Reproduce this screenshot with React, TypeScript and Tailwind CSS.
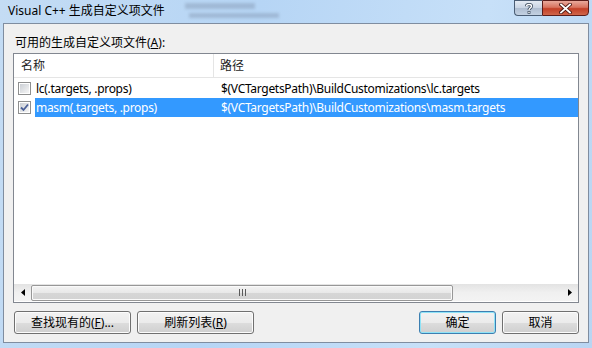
import React from "react";

const ui = { fontFamily: '"Segoe UI", "Noto Sans", "Noto Sans CJK SC", sans-serif' };

function Checkbox({ checked }: { checked?: boolean }) {
  return (
    <div className="w-[13px] h-[13px] border border-[#8e8f8f] bg-white flex items-center justify-center shrink-0">
      <div className="w-[9px] h-[9px] bg-gradient-to-br from-[#cbcfd5] to-[#f6f6f6] flex items-center justify-center">
        {checked && (
          <svg width="9" height="9" viewBox="0 0 9 9">
            <path d="M1 4.5 L3.5 7 L8 1.5" fill="none" stroke="#4a5f97" strokeWidth="1.8" />
          </svg>
        )}
      </div>
    </div>
  );
}

function Button({ children, focused, className }: { children: React.ReactNode; focused?: boolean; className?: string }) {
  return (
    <div
      className={
        "h-[23px] rounded-[3px] border flex items-center justify-center text-[12px] text-black " +
        (focused
          ? "border-[#3c7fb1] shadow-[inset_0_0_0_1px_#8fe3f7] "
          : "border-[#707070] shadow-[inset_0_0_0_1px_#fcfcfc] ") +
        (className ?? "")
      }
      style={{ background: "linear-gradient(#f2f2f2 0%, #ebebeb 50%, #dddddd 51%, #cfcfcf 100%)" }}
    >
      {children}
    </div>
  );
}

function Row({ name, path, checked, selected }: { name: string; path: string; checked?: boolean; selected?: boolean }) {
  return (
    <div className="flex items-center h-[19px] pl-[4px] tracking-[-0.3px]">
      <Checkbox checked={checked} />
      <div className={"flex flex-1 h-full items-center ml-[4px] " + (selected ? "bg-[#3399ff] text-white" : "text-black")}>
        <div className="w-[183px] pl-[1px] whitespace-nowrap">{name}</div>
        <div className="pl-[3px] whitespace-nowrap">{path}</div>
      </div>
    </div>
  );
}

export default function App() {
  return (
    <div
      className="w-[592px] h-[348px] flex flex-col overflow-hidden text-[12px]"
      style={{ ...ui, background: "linear-gradient(100deg, #c4dcf4 0%, #b6d5f5 40%, #c7e0f8 75%, #b9d5f2 100%)" }}
    >
      {/* title bar */}
      <div className="h-[23px] flex items-start shrink-0">
        <div className="pl-[8px] pt-[3px] text-[12px] text-black leading-[16px]">Visual C++ 生成自定义项文件</div>
        {/* blurred desktop behind the glass */}
        <div className="flex flex-col gap-[4px] pl-[14px] pt-[3px] blur-[1.5px] opacity-30">
          <div className="ml-[6px] w-[70px] h-[6px] bg-[#6a7890]" />
          <div className="ml-[10px] w-[90px] h-[5px] bg-[#6a7890]" />
        </div>
        <div className="ml-auto mr-[3px] flex h-[16px]">
          <div
            className="w-[28px] h-[16px] border border-[#4a5d74] border-r-0 rounded-bl-[4px] flex items-center justify-center"
            style={{ background: "linear-gradient(#e4ebf3 0%, #c8d4e3 50%, #aebdd0 51%, #c3d1e2 100%)" }}
          >
            <svg width="10" height="11" viewBox="0 0 10 11">
              <path d="M2.5 3.2 C2.5 1 7.5 1 7.5 3.2 C7.5 5 5 5 5 7" fill="none" stroke="#3a4a5c" strokeWidth="3" />
              <path d="M2.5 3.2 C2.5 1 7.5 1 7.5 3.2 C7.5 5 5 5 5 7" fill="none" stroke="#ffffff" strokeWidth="1.4" />
              <rect x="3.6" y="8" width="2.8" height="2.8" fill="#3a4a5c" />
              <rect x="4.3" y="8.7" width="1.4" height="1.4" fill="#ffffff" />
            </svg>
          </div>
          <div
            className="w-[47px] h-[16px] border border-[#5b1d1a] rounded-br-[4px] flex items-center justify-center"
            style={{ background: "linear-gradient(#e9a99c 0%, #d8735f 45%, #c33f27 55%, #d0664a 100%)" }}
          >
            <svg width="13" height="11" viewBox="0 0 13 11">
              <path d="M2 1.5 L11 9.5 M11 1.5 L2 9.5" stroke="#4b1712" strokeWidth="3.6" strokeLinecap="square" />
              <path d="M2 1.5 L11 9.5 M11 1.5 L2 9.5" stroke="#ffffff" strokeWidth="1.8" strokeLinecap="square" />
            </svg>
          </div>
        </div>
      </div>

      {/* client area */}
      <div className="mx-[3px] mb-[5px] flex-1 border border-[#7f8da0] bg-[#f0f0f0] flex flex-col pl-[9px] pr-[9px]">
        <div className="pl-[2px] pt-[11px] h-[29px] leading-[16px] text-black">
          可用的生成自定义项文件(<span className="underline">A</span>):
        </div>
        <div className="h-[250px] border border-[#828790] bg-white flex flex-col">
          <div className="h-[24px] flex border-b border-[#e5e5e5] text-[#1e1e1e]">
            <div className="w-[200px] border-r border-[#e5e5e5] pl-[7px] flex items-center">名称</div>
            <div className="pl-[6px] flex items-center">路径</div>
          </div>
          <div className="flex flex-col pt-[1px]">
            <Row name="lc(.targets, .props)" path="$(VCTargetsPath)\BuildCustomizations\lc.targets" />
            <Row name="masm(.targets, .props)" path="$(VCTargetsPath)\BuildCustomizations\masm.targets" checked selected />
          </div>
          <div className="flex-1" />
          {/* horizontal scrollbar */}
          <div className="h-[17px] flex items-center bg-gradient-to-b from-[#e3e3e3] via-[#f0f0f0] to-[#f3f3f3] mb-[1px]">
            <div className="w-[17px] flex items-center justify-center">
              <svg width="4" height="7" viewBox="0 0 4 7">
                <path d="M4 0 L0 3.5 L4 7 Z" fill="#000" />
              </svg>
            </div>
            <div
              className="w-[422px] h-[16px] border border-[#979797] rounded-[2px] flex items-center justify-center shadow-[inset_0_0_0_1px_#fafafa]"
              style={{ background: "linear-gradient(#f3f3f3 0%, #e8e8e8 50%, #d6d6d6 51%, #d3d3d3 100%)" }}
            >
              <div className="flex gap-[1px]">
                <div className="w-[1px] h-[7px] bg-[#5a5a5a]" />
                <div className="w-[1px] h-[7px] bg-[#5a5a5a] ml-[1px]" />
                <div className="w-[1px] h-[7px] bg-[#5a5a5a] ml-[1px]" />
              </div>
            </div>
            <div className="flex-1" />
            <div className="w-[17px] flex items-center justify-center">
              <svg width="4" height="7" viewBox="0 0 4 7">
                <path d="M0 0 L4 3.5 L0 7 Z" fill="#000" />
              </svg>
            </div>
          </div>
        </div>
        <div className="flex pt-[8px] pl-[1px]">
          <Button className="w-[117px]">
            查找现有的(<span className="underline">F</span>)...
          </Button>
          <Button className="w-[117px] ml-[6px]">
            刷新列表(<span className="underline">R</span>)
          </Button>
          <div className="flex-1" />
          <Button focused className="w-[77px]">
            确定
          </Button>
          <Button className="w-[77px] ml-[6px]">
            取消
          </Button>
        </div>
      </div>
    </div>
  );
}
